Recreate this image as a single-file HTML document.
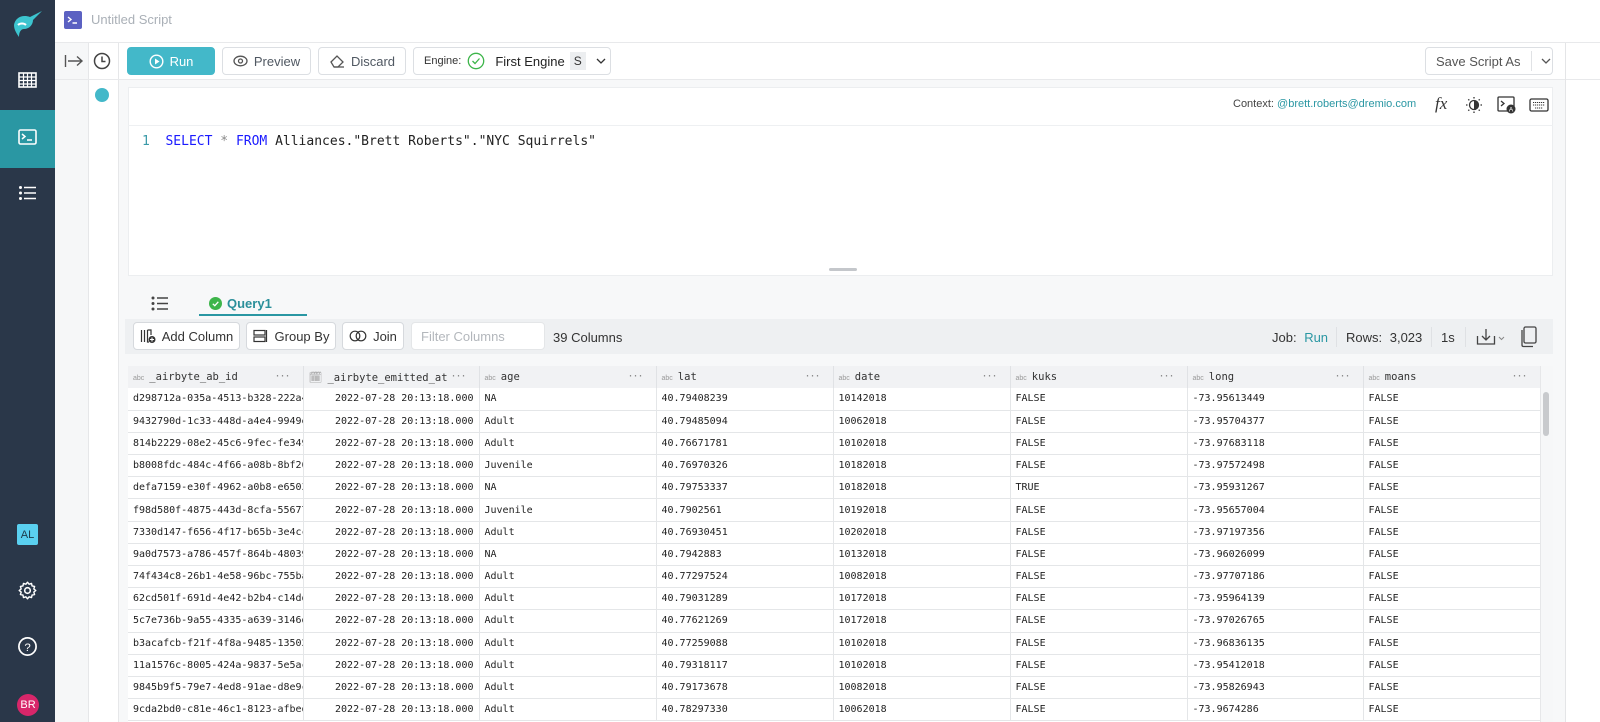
<!DOCTYPE html>
<html><head><meta charset="utf-8"><style>
*{box-sizing:border-box;margin:0;padding:0}
body{width:1600px;height:722px;overflow:hidden;background:#fff;font-family:"Liberation Sans",sans-serif;color:#333;position:relative}
.a{position:absolute}
.sb{left:0;top:0;width:55px;height:722px;background:#2a3749}
.btn{position:absolute;top:47px;height:28px;border:1px solid #dcdfe3;border-radius:4px;background:#fff;font-size:13px;color:#505862;display:flex;align-items:center;justify-content:center;gap:6px}
.tb{position:absolute;top:322px;height:28px;border:1px solid #d6d9dd;border-radius:4px;background:#fff;font-size:13px;color:#333;display:flex;align-items:center;justify-content:center;gap:6px}
table{border-collapse:collapse;table-layout:fixed;font-family:"DejaVu Sans Mono","Liberation Mono",monospace;font-size:10px;color:#222}
td{height:22.2px;border-bottom:1px solid #e4e6e8;border-right:1px solid #e4e6e8;padding:0 5px;white-space:nowrap;overflow:hidden}
th{height:22px;background:#f1f2f4;border-right:1px solid #e0e2e5;font-weight:normal;text-align:left;padding:0 5px;font-size:10.5px;color:#333;white-space:nowrap;overflow:hidden}
th i{font-style:normal;font-size:7px;color:#999;font-family:"Liberation Sans",sans-serif;margin-right:5px}
th b{float:right;font-weight:normal;color:#888;font-size:10px;letter-spacing:-1px;margin-right:8px}
td.r{text-align:right}
</style></head><body>
<div class="a sb"></div>
<div class="a" style="left:0;top:110px;width:55px;height:58px;background:#2a97a3"></div>
<!-- logo -->
<svg class="a" style="left:10px;top:8px" width="34" height="30" viewBox="0 0 34 30"><path d="M32 3 L20 9 C12 6 5 10 4 17 C4 22 7 26 9 29 C9 24 11 21 14 21 C19 21 23 17 23 12 Z" fill="#3cc4cf"/><path d="M8 17 C10 15 14 15 16 17" stroke="#fff" stroke-width="2" fill="none"/></svg>
<!-- grid icon -->
<svg class="a" style="left:18px;top:72px" width="19" height="16" viewBox="0 0 19 16"><rect x="1" y="1" width="17" height="14" fill="none" stroke="#fff" stroke-width="1.6"/><path d="M1 5H18M1 8.5H18M1 12H18M5.5 1V15M9.5 1V15M13.5 1V15" stroke="#fff" stroke-width="1.2"/></svg>
<svg class="a" style="left:18px;top:129px" width="19" height="16" viewBox="0 0 19 16"><rect x="1" y="1" width="17" height="14" rx="1.5" fill="none" stroke="#fff" stroke-width="1.6"/><path d="M4 5L7 7.5L4 10M9 11H14" stroke="#fff" stroke-width="1.5" fill="none"/></svg>
<svg class="a" style="left:18px;top:185px" width="19" height="16" viewBox="0 0 19 16"><circle cx="2.5" cy="2.5" r="1.5" fill="#fff"/><circle cx="2.5" cy="8" r="1.5" fill="#fff"/><circle cx="2.5" cy="13.5" r="1.5" fill="#fff"/><path d="M6 2.5H18M6 8H18M6 13.5H18" stroke="#fff" stroke-width="1.6"/></svg>
<div class="a" style="left:17px;top:524px;width:21px;height:21px;background:#5ad0f0;color:#1d3a4a;font-size:11px;display:flex;align-items:center;justify-content:center;border-radius:2px">AL</div>
<svg class="a" style="left:17px;top:580px" width="21" height="21" viewBox="0 0 24 24"><circle cx="12" cy="12" r="3.2" fill="none" stroke="#fff" stroke-width="1.8"/><path d="M12 2.5l1.8 2.3 2.8-.9.6 2.9 2.9.6-.9 2.8 2.3 1.8-2.3 1.8.9 2.8-2.9.6-.6 2.9-2.8-.9L12 21.5l-1.8-2.3-2.8.9-.6-2.9-2.9-.6.9-2.8L2.5 12l2.3-1.8-.9-2.8 2.9-.6.6-2.9 2.8.9z" fill="none" stroke="#fff" stroke-width="1.6" stroke-linejoin="round"/></svg>
<svg class="a" style="left:17px;top:636px" width="21" height="21" viewBox="0 0 22 22"><circle cx="11" cy="11" r="9" fill="none" stroke="#fff" stroke-width="1.8"/><text x="11" y="15.5" text-anchor="middle" font-size="12" fill="#fff" font-family="Liberation Sans">?</text></svg>
<div class="a" style="left:17px;top:694px;width:22px;height:22px;border-radius:50%;background:#d8266a;color:#fff;font-size:11px;display:flex;align-items:center;justify-content:center">BR</div>

<!-- header -->
<div class="a" style="left:55px;top:0;width:1545px;height:43px;border-bottom:1px solid #e8e9eb"></div>
<div class="a" style="left:64px;top:11px;width:18px;height:18px;background:#5b61c2;border-radius:2px"><svg width="18" height="18"><path d="M4 6L7 8.5L4 11M8.5 12H13" stroke="#fff" stroke-width="1.4" fill="none"/></svg></div>
<div class="a" style="left:91px;top:12px;font-size:13px;color:#aab0b7">Untitled Script</div>

<!-- left strips -->
<div class="a" style="left:55px;top:43px;width:34px;height:679px;background:#f6f7f8;border-right:1px solid #e6e7e9"></div>
<div class="a" style="left:89px;top:43px;width:30px;height:679px;background:#fff;border-right:1px solid #e6e7e9"></div>
<div class="a" style="left:119px;top:80px;width:1446px;height:642px;background:#f7f8f9"></div>
<div class="a" style="left:55px;top:79px;width:1545px;height:1px;background:#e8e9eb"></div>
<svg class="a" style="left:64px;top:53px" width="20" height="16" viewBox="0 0 20 16"><path d="M1.5 2V14M4 8H18M13 3.5L18 8L13 12.5" stroke="#555" stroke-width="1.4" fill="none"/></svg>
<svg class="a" style="left:93px;top:52px" width="18" height="18" viewBox="0 0 18 18"><circle cx="9" cy="9" r="7.5" fill="none" stroke="#444" stroke-width="1.5"/><path d="M9 4.5V9.5H12.5" stroke="#444" stroke-width="1.5" fill="none"/></svg>
<div class="a" style="left:95px;top:88px;width:14px;height:14px;border-radius:50%;background:#43b8c9"></div>

<!-- toolbar -->
<div class="a" style="left:119px;top:43px;width:1446px;height:36px;background:#fff"></div>
<div class="btn" style="left:127px;width:88px;background:#43b8c9;border-color:#43b8c9;color:#fff"><svg width="15" height="15"><circle cx="7.5" cy="7.5" r="6.3" fill="none" stroke="#fff" stroke-width="1.4"/><path d="M6 4.5L10.5 7.5L6 10.5Z" fill="#fff"/></svg>Run</div>
<div class="btn" style="left:222px;width:89px"><svg width="15" height="12"><ellipse cx="7.5" cy="6" rx="6.5" ry="4.8" fill="none" stroke="#555" stroke-width="1.3"/><circle cx="7.5" cy="6" r="2" fill="none" stroke="#555" stroke-width="1.3"/></svg>Preview</div>
<div class="btn" style="left:318px;width:88px"><svg width="16" height="14"><path d="M2 8L8 2L14 8L9 13H5Z" fill="none" stroke="#555" stroke-width="1.3"/><path d="M5 13H15" stroke="#555" stroke-width="1.3"/></svg>Discard</div>
<div class="btn" style="left:413px;width:198px;justify-content:flex-start;padding-left:10px;gap:0"><span style="font-size:11px;color:#333">Engine:</span><svg style="margin:0 6px" width="18" height="18"><circle cx="9" cy="9" r="7.7" fill="none" stroke="#3db54a" stroke-width="1.3"/><path d="M5.5 9L8 11.5L12.5 6.5" stroke="#3db54a" stroke-width="1.3" fill="none"/></svg><span style="color:#222;margin-left:4px">First Engine</span><span style="background:#eceef0;padding:2px 4px;margin-left:5px;color:#333;font-size:12px">S</span><svg style="margin-left:10px" width="10" height="6"><path d="M1 1L5 5L9 1" stroke="#333" stroke-width="1.3" fill="none"/></svg></div>
<div class="btn" style="left:1425px;width:128px;justify-content:flex-start;padding-left:10px;gap:0;color:#555">Save Script As<span style="width:1px;height:20px;background:#e0e2e5;margin-left:10px"></span><svg style="margin-left:9px" width="10" height="6"><path d="M1 1L5 5L9 1" stroke="#555" stroke-width="1.3" fill="none"/></svg></div>
<div class="a" style="left:1565px;top:43px;width:1px;height:679px;background:#e4e5e7"></div>

<!-- editor -->
<div class="a" style="left:128px;top:87px;width:1425px;height:189px;background:#fff;border:1px solid #eceef0"></div>
<div class="a" style="left:128px;top:125px;width:1425px;height:1px;background:#eef0f2"></div>
<div class="a" style="left:1233px;top:98px;font-size:11px;color:#444">Context: <span style="color:#2a97a3">@brett.roberts@dremio.com</span></div>
<div class="a" style="left:1435px;top:94px;font-size:17px;font-style:italic;font-family:'Liberation Serif',serif;color:#333">fx</div>
<svg class="a" style="left:1465px;top:96px" width="18" height="18" viewBox="0 0 18 18"><circle cx="9" cy="9" r="4.5" fill="none" stroke="#333" stroke-width="1.3"/><path d="M9 4.5A4.5 4.5 0 0 1 9 13.5Z" fill="#333"/><path d="M9 1V2.5M9 15.5V17M1 9H2.5M15.5 9H17M3.3 3.3L4.3 4.3M13.7 13.7L14.7 14.7M3.3 14.7L4.3 13.7M13.7 4.3L14.7 3.3" stroke="#333" stroke-width="1.3"/></svg>
<svg class="a" style="left:1497px;top:96px" width="20" height="18" viewBox="0 0 20 18"><rect x="1" y="1" width="16" height="14" rx="1" fill="none" stroke="#333" stroke-width="1.3"/><path d="M4 5L7 7.5L4 10" stroke="#333" stroke-width="1.3" fill="none"/><circle cx="14" cy="13" r="4.5" fill="#333"/><text x="14" y="15.5" font-size="6.5" fill="#fff" text-anchor="middle" font-family="Liberation Sans">A</text></svg>
<svg class="a" style="left:1529px;top:98px" width="20" height="14" viewBox="0 0 20 14"><rect x="1" y="1" width="18" height="12" rx="1.5" fill="none" stroke="#333" stroke-width="1.3"/><path d="M4 4.5H16M4 7H16M6 10H14" stroke="#333" stroke-width="1" stroke-dasharray="1.2 0.8"/></svg>
<div class="a" style="left:142px;top:134px;font-family:'DejaVu Sans Mono','Liberation Mono',monospace;font-size:13px;color:#222;white-space:pre"><span style="color:#3a9aa8">1</span>  <span style="color:#1a1aff">SELECT</span> <span style="color:#888">*</span> <span style="color:#1a1aff">FROM</span> Alliances."Brett Roberts"."NYC Squirrels"</div>
<div class="a" style="left:829px;top:268px;width:28px;height:3px;background:#c4c7cb;border-radius:2px"></div>

<!-- tabs -->
<svg class="a" style="left:151px;top:296px" width="18" height="15" viewBox="0 0 18 15"><circle cx="2" cy="2" r="1.5" fill="#444"/><circle cx="2" cy="7.5" r="1.5" fill="#444"/><circle cx="2" cy="13" r="1.5" fill="#444"/><path d="M6 2H17M6 7.5H17M6 13H17" stroke="#444" stroke-width="1.4"/></svg>
<svg class="a" style="left:209px;top:297px" width="13" height="13"><circle cx="6.5" cy="6.5" r="6.5" fill="#3db54a"/><path d="M3.8 6.8L5.8 8.7L9.3 4.8" stroke="#fff" stroke-width="1.3" fill="none"/></svg>
<div class="a" style="left:227px;top:296px;font-size:13px;font-weight:bold;color:#2a8f9a">Query1</div>
<div class="a" style="left:199px;top:314px;width:108px;height:2px;background:#2a97a3"></div>
<div class="a" style="left:125px;top:319px;width:1428px;height:35px;background:#eef0f2"></div>
<div class="tb" style="left:133px;width:107px"><svg width="16" height="16"><path d="M1.5 2V14M4.5 2V14M7.5 2H11V7M7.5 2V14H9" stroke="#333" stroke-width="1.2" fill="none"/><circle cx="12" cy="11.5" r="3.5" fill="#333"/><path d="M12 9.5V13.5M10 11.5H14" stroke="#fff" stroke-width="1.1"/></svg>Add Column</div>
<div class="tb" style="left:246px;width:90px"><svg width="16" height="14"><rect x="1" y="1.5" width="11" height="4.5" fill="none" stroke="#333" stroke-width="1.2"/><rect x="1" y="8" width="11" height="4.5" fill="none" stroke="#333" stroke-width="1.2"/><path d="M13.5 1V13" stroke="#333" stroke-width="1.2"/></svg>Group By</div>
<div class="tb" style="left:342px;width:62px"><svg width="18" height="12"><circle cx="6" cy="6" r="4.8" fill="none" stroke="#333" stroke-width="1.2"/><circle cx="12" cy="6" r="4.8" fill="none" stroke="#333" stroke-width="1.2"/></svg>Join</div>
<div class="tb" style="left:411px;width:134px;justify-content:flex-start;padding-left:9px;color:#b3b7bc;border-color:#e4e6e8">Filter Columns</div>
<div class="a" style="left:553px;top:330px;font-size:13px;color:#333">39 Columns</div>
<div class="a" style="left:1272px;top:330px;font-size:13px;color:#333">Job: <span style="color:#2a97a3;margin-left:4px">Run</span></div>
<div class="a" style="left:1336px;top:327px;width:1px;height:20px;background:#dfe1e4"></div>
<div class="a" style="left:1346px;top:330px;font-size:13px;color:#333">Rows: <span style="margin-left:4px">3,023</span></div>
<div class="a" style="left:1431px;top:327px;width:1px;height:20px;background:#dfe1e4"></div>
<div class="a" style="left:1441px;top:330px;font-size:13px;color:#333">1s</div>
<div class="a" style="left:1465px;top:327px;width:1px;height:20px;background:#dfe1e4"></div>
<svg class="a" style="left:1476px;top:327px" width="30" height="20"><path d="M1.5 9V17H18.5V9M10 2V13M6 9L10 13L14 9" stroke="#444" stroke-width="1.3" fill="none"/><path d="M23 10L25.5 12.5L28 10" stroke="#888" stroke-width="1" fill="none"/></svg>
<svg class="a" style="left:1520px;top:326px" width="18" height="22"><rect x="4" y="1" width="12" height="16" rx="1.5" fill="none" stroke="#444" stroke-width="1.3"/><path d="M2 4V19C2 20 2.5 20.5 3.5 20.5H13" stroke="#444" stroke-width="1.3" fill="none"/></svg>

<!-- table -->
<div class="a" style="left:128px;top:366px;width:1425px;height:356px;background:#fff;overflow:hidden">
<table style="width:1412px">
<colgroup><col style="width:175px"><col style="width:176px"><col style="width:177px"><col style="width:177px"><col style="width:177px"><col style="width:177px"><col style="width:176px"><col style="width:177px"></colgroup>
<tr><th><i>abc</i>_airbyte_ab_id<b>···</b></th><th><i style="font-size:11px">🗓</i>_airbyte_emitted_at<b>···</b></th><th><i>abc</i>age<b>···</b></th><th><i>abc</i>lat<b>···</b></th><th><i>abc</i>date<b>···</b></th><th><i>abc</i>kuks<b>···</b></th><th><i>abc</i>long<b>···</b></th><th><i>abc</i>moans<b>···</b></th></tr>
<tr><td>d298712a-035a-4513-b328-222a44</td><td class="r">2022-07-28 20:13:18.000</td><td>NA</td><td>40.79408239</td><td>10142018</td><td>FALSE</td><td>-73.95613449</td><td>FALSE</td></tr>
<tr><td>9432790d-1c33-448d-a4e4-9949e9</td><td class="r">2022-07-28 20:13:18.000</td><td>Adult</td><td>40.79485094</td><td>10062018</td><td>FALSE</td><td>-73.95704377</td><td>FALSE</td></tr>
<tr><td>814b2229-08e2-45c6-9fec-fe3491</td><td class="r">2022-07-28 20:13:18.000</td><td>Adult</td><td>40.76671781</td><td>10102018</td><td>FALSE</td><td>-73.97683118</td><td>FALSE</td></tr>
<tr><td>b8008fdc-484c-4f66-a08b-8bf262</td><td class="r">2022-07-28 20:13:18.000</td><td>Juvenile</td><td>40.76970326</td><td>10182018</td><td>FALSE</td><td>-73.97572498</td><td>FALSE</td></tr>
<tr><td>defa7159-e30f-4962-a0b8-e6503c</td><td class="r">2022-07-28 20:13:18.000</td><td>NA</td><td>40.79753337</td><td>10182018</td><td>TRUE</td><td>-73.95931267</td><td>FALSE</td></tr>
<tr><td>f98d580f-4875-443d-8cfa-556775</td><td class="r">2022-07-28 20:13:18.000</td><td>Juvenile</td><td>40.7902561</td><td>10192018</td><td>FALSE</td><td>-73.95657004</td><td>FALSE</td></tr>
<tr><td>7330d147-f656-4f17-b65b-3e4ccb</td><td class="r">2022-07-28 20:13:18.000</td><td>Adult</td><td>40.76930451</td><td>10202018</td><td>FALSE</td><td>-73.97197356</td><td>FALSE</td></tr>
<tr><td>9a0d7573-a786-457f-864b-480395</td><td class="r">2022-07-28 20:13:18.000</td><td>NA</td><td>40.7942883</td><td>10132018</td><td>FALSE</td><td>-73.96026099</td><td>FALSE</td></tr>
<tr><td>74f434c8-26b1-4e58-96bc-755ba6</td><td class="r">2022-07-28 20:13:18.000</td><td>Adult</td><td>40.77297524</td><td>10082018</td><td>FALSE</td><td>-73.97707186</td><td>FALSE</td></tr>
<tr><td>62cd501f-691d-4e42-b2b4-c14dd7</td><td class="r">2022-07-28 20:13:18.000</td><td>Adult</td><td>40.79031289</td><td>10172018</td><td>FALSE</td><td>-73.95964139</td><td>FALSE</td></tr>
<tr><td>5c7e736b-9a55-4335-a639-3146d3</td><td class="r">2022-07-28 20:13:18.000</td><td>Adult</td><td>40.77621269</td><td>10172018</td><td>FALSE</td><td>-73.97026765</td><td>FALSE</td></tr>
<tr><td>b3acafcb-f21f-4f8a-9485-13502a</td><td class="r">2022-07-28 20:13:18.000</td><td>Adult</td><td>40.77259088</td><td>10102018</td><td>FALSE</td><td>-73.96836135</td><td>FALSE</td></tr>
<tr><td>11a1576c-8005-424a-9837-5e5ac2</td><td class="r">2022-07-28 20:13:18.000</td><td>Adult</td><td>40.79318117</td><td>10102018</td><td>FALSE</td><td>-73.95412018</td><td>FALSE</td></tr>
<tr><td>9845b9f5-79e7-4ed8-91ae-d8e9c0</td><td class="r">2022-07-28 20:13:18.000</td><td>Adult</td><td>40.79173678</td><td>10082018</td><td>FALSE</td><td>-73.95826943</td><td>FALSE</td></tr>
<tr><td>9cda2bd0-c81e-46c1-8123-afbed1</td><td class="r">2022-07-28 20:13:18.000</td><td>Adult</td><td>40.78297330</td><td>10062018</td><td>FALSE</td><td>-73.9674286</td><td>FALSE</td></tr>
</table>
<div class="a" style="left:1412px;top:0;width:13px;height:356px;background:#f6f7f8;border-left:1px solid #e6e7e9"></div>
<div class="a" style="left:1415px;top:26px;width:6px;height:44px;background:#c8cacd;border-radius:3px"></div>
</div>
</body></html>
